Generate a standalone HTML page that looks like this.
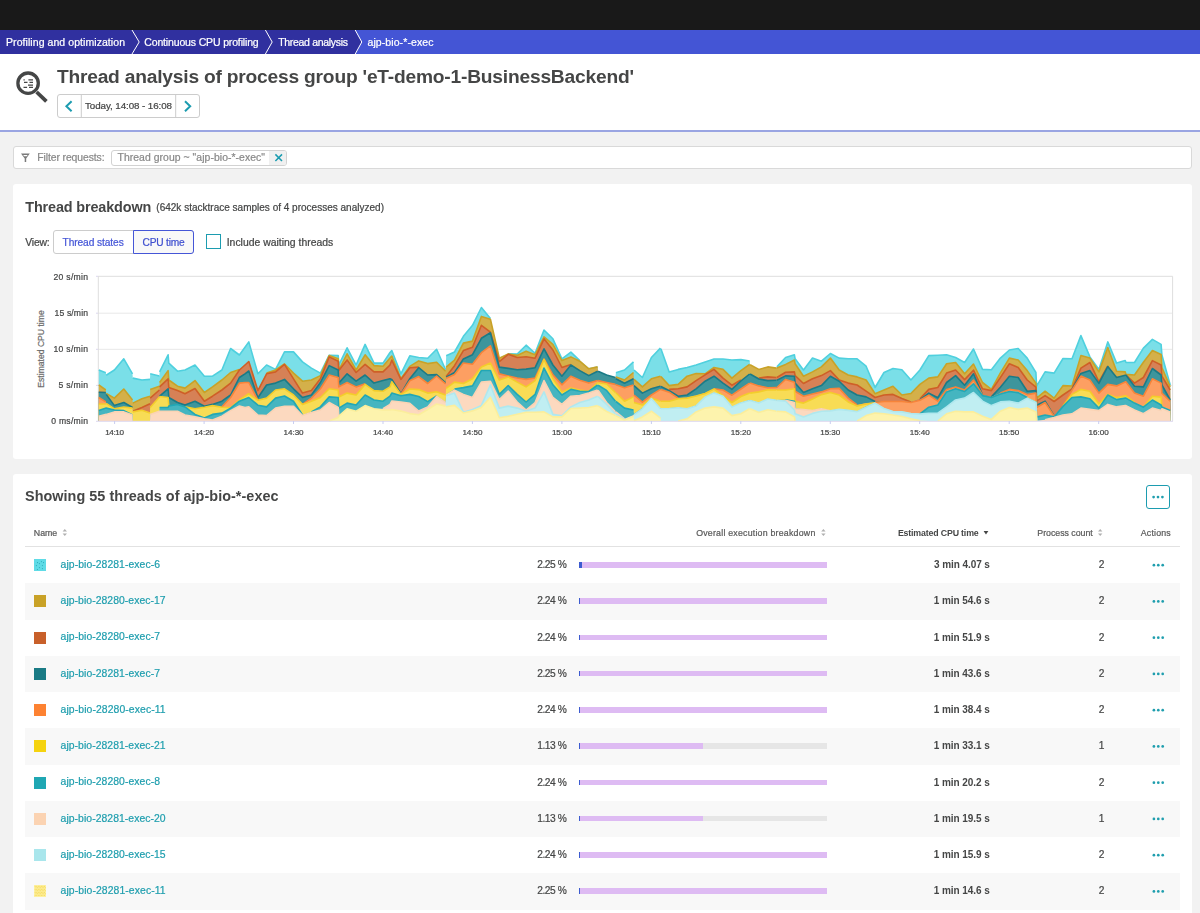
<!DOCTYPE html>
<html>
<head>
<meta charset="utf-8">
<title>Thread analysis</title>
<style>
*{box-sizing:border-box;margin:0;padding:0}
html,body{width:1200px;height:913px;overflow:hidden;background:#f2f2f2;font-family:"Liberation Sans",sans-serif;color:#454646}
.abs{position:absolute}
.t{position:absolute;white-space:nowrap;line-height:1;-webkit-text-stroke:0.22px currentColor}
#topbar{left:0;top:0;width:1200px;height:30px;background:#191919}
#crumbs{left:0;top:30px;width:1200px;height:24px}
#head{left:0;top:54px;width:1200px;height:76.5px;background:#fff}
#hline{left:0;top:130.4px;width:1200px;height:1.4px;background:#9aa5e2}
#tf{left:57px;top:94px;width:143px;height:24px;border:1px solid #ccc;border-radius:3px;background:#fff}
#filter{left:13px;top:146px;width:1178.5px;height:23px;border:1px solid #d9d9d9;border-radius:3px;background:#fff}
#tag{left:110.5px;top:149.5px;width:176.5px;height:16.5px;border:1px solid #d2d2d2;border-radius:3px;background:#fff;overflow:hidden}
#tag i{position:absolute;right:0;top:0;width:17px;height:16px;background:#f0f0f0}
#card1{left:13px;top:184px;width:1178.5px;height:274.5px;background:#fff;border-radius:3px}
#card2{left:13px;top:473.6px;width:1178.5px;height:445px;background:#fff;border-radius:3px}
#tog{left:52.5px;top:230.3px;width:141.7px;height:23.4px;border:1px solid #ccc;border-radius:3px;background:#fff}
#togsel{left:132.6px;top:230.3px;width:61.6px;height:23.4px;border:1px solid #4556d7;border-radius:0 3px 3px 0;background:#f8f8f8}
#cb{left:205.7px;top:234.3px;width:15px;height:15px;border:1.6px solid #1c9cb0;background:#fff}
#morebtn{left:1146px;top:485.3px;width:24px;height:23.4px;border:1px solid #1c9cb0;border-radius:3px;background:#fff}
.dots{position:absolute;width:2.4px;height:2.4px;border-radius:50%;background:#1f9eae;box-shadow:4.5px 0 0 #1f9eae,9px 0 0 #1f9eae}
#thline{left:24.5px;top:546px;width:1155.5px;height:1px;background:#e2e2e2}
#ylab{left:40.6px;top:348.6px;width:0;height:0}
#ylab span{position:absolute;left:-60px;top:-5px;width:120px;text-align:center;font-size:8.6px;line-height:10px;color:#6a6a6a;white-space:nowrap;transform:rotate(-90deg);transform-origin:50% 50%;letter-spacing:0px;-webkit-text-stroke:0.2px #6a6a6a}
</style>
</head>
<body>
<div id="topbar" class="abs"></div>
<svg id="crumbs" class="abs" width="1200" height="24" viewBox="0 0 1200 24">
  <rect x="0" y="0" width="1200" height="24" fill="#4455d5"/>
  <path d="M0,0H355.2L361.8,12L355.2,24H0Z" fill="#30309f"/>
  <path d="M132,0L139.2,12L132,24M265.4,0L272.2,12L265.4,24M355.2,0L361.8,12L355.2,24" fill="none" stroke="#fff" stroke-width="1"/>
</svg>
<div id="head" class="abs"></div>
<div id="hline" class="abs"></div>
<!-- magnifier icon -->
<svg class="abs" style="left:10px;top:64px" width="44" height="44" viewBox="10 64 44 44">
  <circle cx="28.1" cy="83.2" r="10.2" fill="none" stroke="#454646" stroke-width="3.3"/>
  <path d="M36.6,92L46.4,101.4" stroke="#454646" stroke-width="3.8" fill="none"/>
  <path d="M23.5,79.8h1.2M28.4,79.8h4.6M24,82.3h3.5M29.5,82.3h3.5M28,85.1h5M23.5,87.4h3.6M29,87.4h4" stroke="#454646" stroke-width="1.2" fill="none"/>
</svg>
<!-- timeframe -->
<div id="tf" class="abs"></div>
<svg class="abs" style="left:57px;top:94px" width="143" height="24" viewBox="57 94 143 24">
  <path d="M81.3,94.5V117.5M175.7,94.5V117.5" stroke="#ccc" stroke-width="1" fill="none"/>
  <path d="M71.6,101.2L66.4,106.2L71.6,111.2" stroke="#1c9cb0" stroke-width="2" fill="none"/>
  <path d="M185,101.2L190.2,106.2L185,111.2" stroke="#1c9cb0" stroke-width="2" fill="none"/>
</svg>
<!-- filter -->
<div id="filter" class="abs"></div>
<svg class="abs" style="left:20px;top:152px" width="12" height="12" viewBox="20 152 12 12">
  <path fill-rule="evenodd" d="M21,153.5H29.8L26.2,158.4V162.1H24.7V158.4ZM23.2,155.1H27.6L26.8,156.2H24Z" fill="#7a7a7a"/>
</svg>
<div id="tag" class="abs"><i></i></div>
<svg class="abs" style="left:274px;top:153px" width="10" height="10" viewBox="274 153 10 10">
  <path d="M275.4,154.4L282,161M282,154.4L275.4,161" stroke="#1c9cb0" stroke-width="1.5" fill="none"/>
</svg>
<!-- cards -->
<div id="card1" class="abs"></div>
<div id="card2" class="abs"></div>
<div id="tog" class="abs"></div>
<div id="togsel" class="abs"></div>
<div id="cb" class="abs"></div>
<!-- chart -->
<svg class="abs" style="left:0;top:270px" width="1200" height="160" viewBox="0 270 1200 160">
  <g stroke="#e8e8e8" stroke-width="1" fill="none">
    <path d="M98,313.2H1172.6M98,349.3H1172.6M98,385.4H1172.6"/>
  </g>
  <path d="M98,276.3H1172.6V421M98.3,276.3V421" stroke="#dedede" stroke-width="1" fill="none"/>
  <g>
<path d="M98.8,421.0L98.8,370.0L105.8,372.8L106.2,375.2L114.4,370.0L123.8,358.8L132.5,373.8L132.8,378.1L141.9,380.0L150.0,379.4L150.2,373.8L159.4,376.0L159.6,371.9L168.1,354.8L168.8,363.1L177.5,371.2L185.0,370.0L195.0,365.0L204.4,376.2L212.5,376.2L221.9,370.0L230.6,348.5L239.4,355.0L245.0,347.2L248.8,341.9L257.9,373.8L266.6,365.0L275.6,369.4L284.5,351.9L293.5,351.9L302.5,361.9L311.4,368.1L320.4,373.1L329.2,355.2L338.2,355.6L338.8,365.0L347.1,347.8L356.1,365.0L365.1,344.4L374.0,363.1L383.0,363.1L390.0,352.5L391.8,350.6L400.9,373.9L409.8,355.8L418.7,357.5L427.7,358.2L436.6,349.3L445.6,369.8L446.2,355.8L454.5,352.0L463.4,336.3L472.5,325.3L481.4,307.5L490.4,318.5L499.3,357.5L508.2,353.8L517.2,354.1L526.1,345.2L535.1,353.4L544.0,330.0L552.9,338.8L561.9,358.8L570.9,352.2L579.8,360.6L588.8,368.1L597.6,366.2L598.1,371.2L606.6,375.0L615.4,377.5L615.9,372.8L624.5,370.0L633.5,361.9L634.0,370.0L642.4,377.5L651.4,357.5L660.4,348.1L660.9,348.8L669.2,371.9L678.2,369.4L687.1,367.5L696.1,365.0L705.1,361.9L714.0,359.0L723.0,359.0L731.9,360.0L740.9,359.6L749.6,361.0L750.1,364.8L758.8,369.4L767.8,366.9L776.4,367.8L776.9,366.9L785.6,357.5L794.4,354.8L795.1,358.8L803.5,370.0L812.5,358.1L821.4,361.2L830.4,353.5L839.2,358.1L848.2,358.8L857.1,358.8L866.1,366.2L875.1,387.5L884.0,372.5L893.0,368.5L901.9,369.8L910.9,380.0L919.9,370.0L928.8,355.6L937.8,355.2L946.6,354.8L955.6,357.5L964.6,362.5L973.5,349.0L982.5,369.4L991.4,369.8L1000.4,358.1L1009.4,350.0L1018.2,348.5L1027.2,358.1L1035.9,372.5L1036.6,386.2L1045.1,371.9L1054.1,373.1L1063.0,358.5L1072.0,358.8L1080.9,335.6L1089.9,356.9L1098.9,369.4L1107.8,341.9L1116.6,363.1L1125.2,360.6L1126.0,362.5L1134.5,362.5L1143.4,348.1L1152.4,339.4L1161.1,344.4L1161.9,355.0L1170.2,385.0L1170.6,421.0L1170.6,421.0Z" fill="#7adfe8"/>
<path d="M98.8,370.0L105.8,372.8M106.2,375.2L114.4,370.0L123.8,358.8L132.5,373.8M132.8,378.1L141.9,380.0L150.0,379.4M150.2,373.8L159.4,376.0M159.6,371.9L168.1,354.8L168.8,363.1L177.5,371.2L185.0,370.0L195.0,365.0L204.4,376.2L212.5,376.2L221.9,370.0L230.6,348.5L239.4,355.0L245.0,347.2L248.8,341.9L257.9,373.8L266.6,365.0L275.6,369.4L284.5,351.9L293.5,351.9L302.5,361.9L311.4,368.1L320.4,373.1L329.2,355.2L338.2,355.6L338.8,365.0L347.1,347.8L356.1,365.0L365.1,344.4L374.0,363.1L383.0,363.1L390.0,352.5L391.8,350.6L400.9,373.9L409.8,355.8L418.7,357.5L427.7,358.2L436.6,349.3L445.6,369.8M446.2,355.8L454.5,352.0L463.4,336.3L472.5,325.3L481.4,307.5L490.4,318.5M508.2,353.8L517.2,354.1L526.1,345.2L535.1,353.4L544.0,330.0L552.9,338.8L561.9,358.8L570.9,352.2L579.8,360.6M615.9,372.8L624.5,370.0L633.5,361.9M634.0,370.0L642.4,377.5L651.4,357.5L660.4,348.1M660.9,348.8L669.2,371.9L678.2,369.4L687.1,367.5L696.1,365.0L705.1,361.9L714.0,359.0L723.0,359.0L731.9,360.0L740.9,359.6L749.6,361.0M776.9,366.9L785.6,357.5L794.4,354.8L795.1,358.8L803.5,370.0L812.5,358.1L821.4,361.2L830.4,353.5L839.2,358.1L848.2,358.8L857.1,358.8L866.1,366.2L875.1,387.5L884.0,372.5L893.0,368.5L901.9,369.8L910.9,380.0L919.9,370.0L928.8,355.6L937.8,355.2L946.6,354.8L955.6,357.5L964.6,362.5L973.5,349.0L982.5,369.4L991.4,369.8L1000.4,358.1L1009.4,350.0L1018.2,348.5L1027.2,358.1L1035.9,372.5L1036.6,386.2L1045.1,371.9L1054.1,373.1L1063.0,358.5L1072.0,358.8L1080.9,335.6L1089.9,356.9L1098.9,369.4L1107.8,341.9L1116.6,363.1L1125.2,360.6L1126.0,362.5L1134.5,362.5L1143.4,348.1L1152.4,339.4L1161.1,344.4L1161.9,355.0L1170.2,385.0" fill="none" stroke="#4fd0de" stroke-width="1.6" stroke-linejoin="round"/>
<path d="M98.8,421.0L98.8,384.8L105.8,390.0L106.2,393.5L114.4,398.1L123.8,389.0L132.5,400.0L132.8,403.1L141.9,398.8L150.0,396.2L150.2,389.4L159.4,386.2L159.6,382.5L168.1,370.6L168.8,380.0L177.5,386.2L185.0,388.1L195.0,380.6L204.4,392.5L212.5,386.9L221.9,380.0L230.6,372.5L239.4,369.4L245.0,364.4L248.8,361.0L257.9,390.0L266.6,373.1L275.6,370.0L284.5,364.0L293.5,373.1L302.5,381.2L311.4,380.0L320.4,375.6L329.2,355.6L338.2,358.8L338.8,370.0L347.1,353.8L356.1,370.0L365.1,354.8L374.0,365.6L383.0,366.2L390.0,358.1L391.8,356.1L400.9,378.7L409.8,366.4L418.7,360.9L427.7,363.6L436.6,362.3L445.6,371.2L446.2,367.1L454.5,360.2L463.4,343.1L472.5,341.1L481.4,316.4L490.4,319.2L499.3,358.2L508.2,354.1L517.2,355.4L526.1,351.3L535.1,354.7L544.0,336.9L552.9,344.4L561.9,360.6L570.9,356.9L579.8,361.2L588.8,368.8L597.6,366.9L598.1,371.2L606.6,375.0L615.4,377.5L615.9,376.9L624.5,380.0L633.5,372.5L634.0,379.4L642.4,386.9L651.4,378.8L660.4,376.2L660.9,376.5L669.2,385.6L678.2,384.4L687.1,376.2L696.1,373.5L705.1,373.8L714.0,367.5L723.0,369.4L731.9,378.1L740.9,370.6L749.6,364.4L750.1,364.8L758.8,369.4L767.8,366.9L776.4,368.1L776.9,368.1L785.6,364.4L794.4,360.0L795.1,363.8L803.5,376.2L812.5,371.9L821.4,366.9L830.4,358.1L839.2,370.0L848.2,375.0L857.1,376.9L866.1,380.0L875.1,393.8L884.0,390.0L893.0,386.2L901.9,395.0L910.9,393.5L919.9,384.4L928.8,378.1L937.8,376.9L946.6,363.8L955.6,362.5L964.6,373.8L973.5,364.0L982.5,382.5L991.4,389.4L1000.4,372.8L1009.4,358.1L1018.2,360.0L1027.2,370.6L1035.9,383.1L1036.6,398.1L1045.1,391.2L1054.1,398.1L1063.0,385.6L1072.0,386.0L1080.9,355.6L1089.9,358.1L1098.9,371.9L1107.8,347.5L1116.6,371.2L1125.2,371.9L1126.0,374.4L1134.5,375.0L1143.4,362.2L1152.4,350.6L1161.1,354.4L1161.9,367.5L1170.2,386.9L1170.6,421.0L1170.6,421.0Z" fill="#d4b04a"/>
<path d="M98.8,384.8L105.8,390.0M106.2,393.5L114.4,398.1L123.8,389.0L132.5,400.0M132.8,403.1L141.9,398.8L150.0,396.2M150.2,389.4L159.4,386.2M159.6,382.5L168.1,370.6L168.8,380.0L177.5,386.2L185.0,388.1L195.0,380.6L204.4,392.5L212.5,386.9L221.9,380.0L230.6,372.5L239.4,369.4M266.6,373.1L275.6,370.0L284.5,364.0L293.5,373.1L302.5,381.2L311.4,380.0L320.4,375.6L329.2,355.6L338.2,358.8L338.8,370.0L347.1,353.8L356.1,370.0L365.1,354.8L374.0,365.6L383.0,366.2L390.0,358.1L391.8,356.1L400.9,378.7L409.8,366.4L418.7,360.9L427.7,363.6L436.6,362.3L445.6,371.2M446.2,367.1L454.5,360.2L463.4,343.1L472.5,341.1L481.4,316.4L490.4,319.2L499.3,358.2L508.2,354.1L517.2,355.4L526.1,351.3L535.1,354.7L544.0,336.9L552.9,344.4L561.9,360.6L570.9,356.9L579.8,361.2L588.8,368.8L597.6,366.9M615.9,376.9L624.5,380.0L633.5,372.5M634.0,379.4L642.4,386.9L651.4,378.8L660.4,376.2M660.9,376.5L669.2,385.6L678.2,384.4L687.1,376.2L696.1,373.5L705.1,373.8L714.0,367.5L723.0,369.4L731.9,378.1L740.9,370.6L749.6,364.4M750.1,364.8L758.8,369.4L767.8,366.9L776.4,368.1M776.9,368.1L785.6,364.4L794.4,360.0L795.1,363.8L803.5,376.2L812.5,371.9L821.4,366.9L830.4,358.1L839.2,370.0L848.2,375.0L857.1,376.9L866.1,380.0L875.1,393.8L884.0,390.0L893.0,386.2L901.9,395.0L910.9,393.5L919.9,384.4L928.8,378.1L937.8,376.9L946.6,363.8L955.6,362.5L964.6,373.8L973.5,364.0L982.5,382.5L991.4,389.4L1000.4,372.8L1009.4,358.1L1018.2,360.0L1027.2,370.6L1035.9,383.1L1036.6,398.1L1045.1,391.2L1054.1,398.1L1063.0,385.6L1072.0,386.0L1080.9,355.6L1089.9,358.1L1098.9,371.9L1107.8,347.5L1116.6,371.2L1125.2,371.9L1126.0,374.4L1134.5,375.0L1143.4,362.2L1152.4,350.6L1161.1,354.4L1161.9,367.5L1170.2,386.9" fill="none" stroke="#c9a227" stroke-width="1.6" stroke-linejoin="round"/>
<path d="M98.8,421.0L98.8,391.2L105.8,391.9L106.2,394.4L114.4,405.6L123.8,402.5L132.5,407.5L132.8,411.2L141.9,407.5L150.0,403.8L150.2,398.1L159.4,390.0L159.6,386.9L168.1,378.8L168.8,387.5L177.5,390.6L185.0,393.8L195.0,388.5L204.4,401.2L212.5,396.2L221.9,390.0L230.6,383.1L239.4,370.0L245.0,365.0L248.8,361.5L257.9,390.6L266.6,373.8L275.6,371.9L284.5,364.4L293.5,378.8L302.5,393.1L311.4,390.6L320.4,378.8L329.2,356.9L338.2,361.2L338.8,370.6L347.1,360.0L356.1,372.5L365.1,364.4L374.0,371.9L383.0,371.9L390.0,365.0L391.8,360.2L400.9,379.4L409.8,367.7L418.7,367.1L427.7,374.6L436.6,373.9L445.6,382.1L446.2,376.6L454.5,365.7L463.4,350.6L472.5,347.2L481.4,325.3L490.4,332.2L499.3,361.6L508.2,354.3L517.2,357.5L526.1,356.8L535.1,358.2L544.0,338.8L552.9,350.0L561.9,367.5L570.9,364.4L579.8,370.0L588.8,375.0L597.6,370.6L598.1,371.2L606.6,375.0L615.4,377.5L615.9,378.5L624.5,382.8L633.5,378.1L634.0,385.0L642.4,392.5L651.4,388.1L660.4,385.6L660.9,385.8L669.2,389.4L678.2,388.8L687.1,386.9L696.1,380.6L705.1,374.8L714.0,369.4L723.0,378.1L731.9,385.2L740.9,380.0L749.6,373.8L750.1,373.8L758.8,378.1L767.8,376.9L776.4,377.5L776.9,377.5L785.6,372.2L794.4,371.9L795.1,375.6L803.5,383.5L812.5,378.8L821.4,375.6L830.4,370.6L839.2,380.0L848.2,383.1L857.1,385.0L866.1,391.2L875.1,397.5L884.0,395.0L893.0,394.4L901.9,398.4L910.9,401.9L919.9,398.8L928.8,389.4L937.8,387.5L946.6,373.1L955.6,370.0L964.6,379.6L973.5,370.2L982.5,388.8L991.4,390.6L1000.4,377.5L1009.4,363.8L1018.2,367.5L1027.2,380.0L1035.9,387.2L1036.6,401.2L1045.1,395.6L1054.1,401.5L1063.0,395.0L1072.0,388.8L1080.9,368.1L1089.9,362.5L1098.9,381.9L1107.8,366.0L1116.6,377.1L1125.2,375.0L1126.0,375.0L1134.5,383.1L1143.4,377.5L1152.4,360.6L1161.1,365.0L1161.9,376.2L1170.2,390.0L1170.6,421.0L1170.6,421.0Z" fill="#d68156"/>
<path d="M132.8,411.2L141.9,407.5L150.0,403.8M150.2,398.1L159.4,390.0M159.6,386.9L168.1,378.8L168.8,387.5L177.5,390.6L185.0,393.8L195.0,388.5L204.4,401.2L212.5,396.2L221.9,390.0L230.6,383.1L239.4,370.0L245.0,365.0L248.8,361.5L257.9,390.6L266.6,373.8L275.6,371.9L284.5,364.4L293.5,378.8L302.5,393.1L311.4,390.6L320.4,378.8L329.2,356.9L338.2,361.2L338.8,370.6L347.1,360.0L356.1,372.5L365.1,364.4L374.0,371.9L383.0,371.9L390.0,365.0L391.8,360.2L400.9,379.4L409.8,367.7L418.7,367.1M446.2,376.6L454.5,365.7L463.4,350.6L472.5,347.2L481.4,325.3L490.4,332.2L499.3,361.6L508.2,354.3L517.2,357.5L526.1,356.8L535.1,358.2L544.0,338.8L552.9,350.0L561.9,367.5L570.9,364.4M669.2,389.4L678.2,388.8L687.1,386.9L696.1,380.6L705.1,374.8L714.0,369.4L723.0,378.1L731.9,385.2L740.9,380.0M758.8,378.1L767.8,376.9L776.4,377.5M776.9,377.5L785.6,372.2L794.4,371.9L795.1,375.6L803.5,383.5L812.5,378.8L821.4,375.6L830.4,370.6L839.2,380.0L848.2,383.1L857.1,385.0L866.1,391.2L875.1,397.5L884.0,395.0L893.0,394.4L901.9,398.4L910.9,401.9M919.9,398.8L928.8,389.4L937.8,387.5L946.6,373.1L955.6,370.0L964.6,379.6L973.5,370.2L982.5,388.8L991.4,390.6L1000.4,377.5L1009.4,363.8L1018.2,367.5L1027.2,380.0L1035.9,387.2L1036.6,401.2L1045.1,395.6L1054.1,401.5L1063.0,395.0L1072.0,388.8L1080.9,368.1L1089.9,362.5L1098.9,381.9L1107.8,366.0M1126.0,375.0L1134.5,383.1L1143.4,377.5L1152.4,360.6L1161.1,365.0L1161.9,376.2L1170.2,390.0" fill="none" stroke="#cf5f27" stroke-width="1.6" stroke-linejoin="round"/>
<path d="M98.8,421.0L98.8,392.2L105.8,392.5L106.2,394.4L114.4,405.6L123.8,402.5L132.5,407.5L132.8,411.9L141.9,410.2L150.0,413.1L150.2,407.5L159.4,396.9L159.6,396.2L168.1,388.8L168.8,397.5L177.5,402.5L185.0,405.0L195.0,401.2L204.4,406.2L212.5,404.4L221.9,401.2L230.6,395.0L239.4,377.5L245.0,373.8L248.8,371.0L257.9,397.8L266.6,385.0L275.6,383.1L284.5,379.4L293.5,388.8L302.5,397.5L311.4,395.0L320.4,382.5L329.2,365.6L338.2,370.0L338.8,383.1L347.1,373.8L356.1,381.2L365.1,375.0L374.0,383.1L383.0,380.6L390.0,378.8L391.8,379.4L400.9,393.8L409.8,378.7L418.7,367.7L427.7,375.0L436.6,374.6L445.6,382.8L446.2,377.3L454.5,372.5L463.4,358.9L472.5,354.7L481.4,338.3L490.4,332.8L499.3,367.1L508.2,368.4L517.2,369.8L526.1,369.1L535.1,367.7L544.0,348.8L552.9,365.0L561.9,376.2L570.9,365.0L579.8,370.6L588.8,375.6L597.6,371.2L598.1,371.2L606.6,375.0L615.4,377.5L615.9,378.8L624.5,383.2L633.5,378.8L634.0,385.6L642.4,393.1L651.4,388.8L660.4,386.2L660.9,386.5L669.2,390.6L678.2,396.2L687.1,395.0L696.1,388.8L705.1,381.2L714.0,376.2L723.0,383.1L731.9,389.4L740.9,381.0L749.6,374.0L750.1,374.0L758.8,379.0L767.8,380.6L776.4,380.2L776.9,380.2L785.6,375.9L794.4,376.2L795.1,383.1L803.5,392.5L812.5,388.8L821.4,385.6L830.4,376.2L839.2,381.2L848.2,390.0L857.1,395.0L866.1,396.9L875.1,401.5L884.0,401.2L893.0,401.2L901.9,401.2L910.9,402.1L919.9,399.8L928.8,393.1L937.8,397.8L946.6,382.5L955.6,375.6L964.6,385.2L973.5,373.8L982.5,394.8L991.4,396.9L1000.4,387.2L1009.4,376.2L1018.2,377.5L1027.2,391.2L1035.9,390.6L1036.6,405.2L1045.1,401.2L1054.1,415.9L1063.0,405.2L1072.0,389.8L1080.9,373.5L1089.9,370.6L1098.9,383.4L1107.8,366.5L1116.6,377.5L1125.2,375.2L1126.0,375.2L1134.5,386.2L1143.4,386.9L1152.4,368.5L1161.1,375.0L1161.9,385.0L1170.2,400.0L1170.6,421.0L1170.6,421.0Z" fill="#3d959c"/>
<path d="M98.8,392.2L105.8,392.5M106.2,394.4L114.4,405.6L123.8,402.5L132.5,407.5M159.6,396.2L168.1,388.8L168.8,397.5L177.5,402.5L185.0,405.0L195.0,401.2L204.4,406.2L212.5,404.4L221.9,401.2L230.6,395.0L239.4,377.5L245.0,373.8L248.8,371.0L257.9,397.8L266.6,385.0L275.6,383.1L284.5,379.4L293.5,388.8L302.5,397.5L311.4,395.0L320.4,382.5L329.2,365.6L338.2,370.0L338.8,383.1L347.1,373.8L356.1,381.2L365.1,375.0L374.0,383.1L383.0,380.6L390.0,378.8L391.8,379.4L400.9,393.8L409.8,378.7L418.7,367.7L427.7,375.0L436.6,374.6L445.6,382.8M446.2,377.3L454.5,372.5L463.4,358.9L472.5,354.7L481.4,338.3L490.4,332.8L499.3,367.1L508.2,368.4L517.2,369.8L526.1,369.1L535.1,367.7L544.0,348.8L552.9,365.0L561.9,376.2L570.9,365.0L579.8,370.6L588.8,375.6L597.6,371.2M598.1,371.2L606.6,375.0L615.4,377.5M615.9,378.8L624.5,383.2L633.5,378.8M634.0,385.6L642.4,393.1L651.4,388.8L660.4,386.2M660.9,386.5L669.2,390.6L678.2,396.2L687.1,395.0L696.1,388.8L705.1,381.2L714.0,376.2L723.0,383.1L731.9,389.4L740.9,381.0L749.6,374.0M750.1,374.0L758.8,379.0L767.8,380.6L776.4,380.2M776.9,380.2L785.6,375.9L794.4,376.2L795.1,383.1L803.5,392.5L812.5,388.8L821.4,385.6L830.4,376.2L839.2,381.2L848.2,390.0L857.1,395.0L866.1,396.9L875.1,401.5M919.9,399.8L928.8,393.1L937.8,397.8L946.6,382.5L955.6,375.6L964.6,385.2L973.5,373.8L982.5,394.8M991.4,396.9L1000.4,387.2L1009.4,376.2L1018.2,377.5L1027.2,391.2L1035.9,390.6L1036.6,405.2L1045.1,401.2L1054.1,415.9M1072.0,389.8L1080.9,373.5L1089.9,370.6L1098.9,383.4L1107.8,366.5L1116.6,377.5L1125.2,375.2L1126.0,375.2L1134.5,386.2L1143.4,386.9L1152.4,368.5L1161.1,375.0L1161.9,385.0L1170.2,400.0" fill="none" stroke="#1a7b87" stroke-width="1.6" stroke-linejoin="round"/>
<path d="M98.8,421.0L98.8,397.5L105.8,401.9L106.2,403.1L114.4,408.8L123.8,406.9L132.5,408.1L132.8,411.9L141.9,410.2L150.0,413.1L150.2,407.5L159.4,396.9L159.6,396.5L168.1,397.5L168.8,406.0L177.5,404.4L185.0,406.9L195.0,408.8L204.4,407.2L212.5,405.6L221.9,406.9L230.6,397.5L239.4,383.1L245.0,382.5L248.8,382.5L257.9,400.2L266.6,398.1L275.6,390.0L284.5,388.8L293.5,395.0L302.5,404.4L311.4,398.1L320.4,388.8L329.2,375.0L338.2,377.5L338.8,386.9L347.1,382.5L356.1,386.9L365.1,383.8L374.0,390.6L383.0,391.2L390.0,386.9L391.8,381.4L400.9,394.2L409.8,380.7L418.7,376.6L427.7,383.5L436.6,376.0L445.6,383.8L446.2,378.3L454.5,374.6L463.4,363.0L472.5,364.3L481.4,352.7L490.4,345.8L499.3,373.9L508.2,376.0L517.2,378.0L526.1,379.4L535.1,378.0L544.0,359.0L552.9,374.8L561.9,384.8L570.9,376.2L579.8,380.2L588.8,383.1L597.6,380.6L598.1,380.6L606.6,382.5L615.4,384.4L615.9,384.8L624.5,387.8L633.5,385.0L634.0,395.0L642.4,402.1L651.4,395.0L660.4,389.4L660.9,389.6L669.2,392.2L678.2,398.1L687.1,397.5L696.1,395.6L705.1,393.1L714.0,388.8L723.0,390.0L731.9,395.2L740.9,389.0L749.6,383.1L750.1,383.1L758.8,385.9L767.8,387.8L776.4,387.5L776.9,387.5L785.6,379.4L794.4,382.2L795.1,391.2L803.5,396.2L812.5,394.0L821.4,391.9L830.4,388.8L839.2,388.4L848.2,398.1L857.1,405.0L866.1,403.1L875.1,402.5L884.0,401.5L893.0,401.5L901.9,401.5L910.9,402.5L919.9,400.2L928.8,395.2L937.8,401.2L946.6,389.6L955.6,386.9L964.6,390.0L973.5,380.0L982.5,395.0L991.4,397.1L1000.4,393.1L1009.4,389.4L1018.2,390.6L1027.2,394.6L1035.9,393.1L1036.6,407.5L1045.1,402.5L1054.1,416.2L1063.0,405.9L1072.0,390.1L1080.9,376.1L1089.9,380.0L1098.9,393.1L1107.8,384.4L1116.6,385.9L1125.2,381.9L1126.0,381.9L1134.5,393.1L1143.4,396.2L1152.4,378.8L1161.1,383.1L1161.9,393.1L1170.2,401.2L1170.6,421.0L1170.6,421.0Z" fill="#fd9f62"/>
<path d="M98.8,397.5L105.8,401.9M221.9,406.9L230.6,397.5L239.4,383.1L245.0,382.5L248.8,382.5L257.9,400.2M302.5,404.4L311.4,398.1L320.4,388.8L329.2,375.0L338.2,377.5L338.8,386.9L347.1,382.5L356.1,386.9L365.1,383.8M400.9,394.2L409.8,380.7L418.7,376.6L427.7,383.5L436.6,376.0L445.6,383.8M446.2,378.3L454.5,374.6L463.4,363.0L472.5,364.3L481.4,352.7L490.4,345.8L499.3,373.9L508.2,376.0L517.2,378.0L526.1,379.4L535.1,378.0L544.0,359.0L552.9,374.8L561.9,384.8L570.9,376.2L579.8,380.2L588.8,383.1L597.6,380.6M598.1,380.6L606.6,382.5L615.4,384.4M615.9,384.8L624.5,387.8L633.5,385.0M634.0,395.0L642.4,402.1L651.4,395.0L660.4,389.4M660.9,389.6L669.2,392.2L678.2,398.1M714.0,388.8L723.0,390.0L731.9,395.2L740.9,389.0L749.6,383.1M750.1,383.1L758.8,385.9L767.8,387.8L776.4,387.5M776.9,387.5L785.6,379.4L794.4,382.2L795.1,391.2L803.5,396.2L812.5,394.0L821.4,391.9L830.4,388.8L839.2,388.4L848.2,398.1L857.1,405.0M875.1,402.5L884.0,401.5L893.0,401.5L901.9,401.5L910.9,402.5L919.9,400.2L928.8,395.2L937.8,401.2L946.6,389.6L955.6,386.9L964.6,390.0L973.5,380.0L982.5,395.0M1000.4,393.1L1009.4,389.4L1018.2,390.6L1027.2,394.6L1035.9,393.1L1036.6,407.5L1045.1,402.5L1054.1,416.2M1063.0,405.9L1072.0,390.1L1080.9,376.1L1089.9,380.0L1098.9,393.1L1107.8,384.4L1116.6,385.9L1125.2,381.9L1126.0,381.9L1134.5,393.1L1143.4,396.2L1152.4,378.8L1161.1,383.1L1161.9,393.1L1170.2,401.2" fill="none" stroke="#f7843a" stroke-width="1.6" stroke-linejoin="round"/>
<path d="M98.8,421.0L98.8,404.0L105.8,404.0L106.2,403.4L114.4,408.9L123.8,407.0L132.5,408.1L132.8,411.9L141.9,410.2L150.0,413.1L150.2,407.5L159.4,396.9L159.6,396.5L168.1,397.5L168.8,406.0L177.5,404.4L185.0,406.9L195.0,408.8L204.4,407.2L212.5,405.6L221.9,407.2L230.6,407.5L239.4,400.0L245.0,396.2L248.8,393.8L257.9,400.2L266.6,398.1L275.6,390.0L284.5,388.8L293.5,395.0L302.5,404.4L311.4,401.2L320.4,397.5L329.2,388.8L338.2,390.0L338.8,396.9L347.1,393.1L356.1,395.0L365.1,384.4L374.0,390.6L383.0,391.2L390.0,386.9L391.8,381.8L400.9,394.4L409.8,389.0L418.7,389.6L427.7,393.1L436.6,391.7L445.6,395.1L446.2,388.3L454.5,382.1L463.4,383.5L472.5,378.7L481.4,367.1L490.4,363.0L499.3,380.1L508.2,376.9L517.2,382.1L526.1,386.9L535.1,380.7L544.0,359.4L552.9,378.5L561.9,391.9L570.9,388.1L579.8,390.0L588.8,391.2L597.6,382.5L598.1,382.8L606.6,384.0L615.4,392.5L615.9,392.8L624.5,401.2L633.5,396.9L634.0,402.5L642.4,405.0L651.4,398.1L660.4,401.2L660.9,401.2L669.2,401.2L678.2,398.8L687.1,398.1L696.1,396.0L705.1,393.5L714.0,389.0L723.0,395.6L731.9,402.5L740.9,396.5L749.6,393.1L750.1,393.1L758.8,391.9L767.8,389.8L776.4,390.0L776.9,390.0L785.6,390.0L794.4,388.8L795.1,401.2L803.5,403.1L812.5,399.0L821.4,394.6L830.4,392.5L839.2,395.0L848.2,401.9L857.1,405.9L866.1,404.0L875.1,402.9L884.0,408.1L893.0,411.2L901.9,411.2L910.9,413.1L919.9,413.8L928.8,406.9L937.8,404.6L946.6,391.5L955.6,388.4L964.6,391.2L973.5,383.1L982.5,395.2L991.4,397.2L1000.4,393.5L1009.4,390.9L1018.2,392.1L1027.2,396.9L1035.9,401.2L1036.6,416.9L1045.1,414.4L1054.1,416.5L1063.0,406.1L1072.0,394.4L1080.9,389.4L1089.9,391.2L1098.9,403.8L1107.8,394.4L1116.6,397.5L1125.2,395.9L1126.0,395.9L1134.5,402.5L1143.4,406.9L1152.4,396.2L1161.1,397.1L1161.9,406.2L1170.2,410.0L1170.6,421.0L1170.6,421.0Z" fill="#f8dc55"/>
<path d="M98.8,404.0L105.8,404.0M106.2,403.4L114.4,408.9L123.8,407.0L132.5,408.1M132.8,411.9L141.9,410.2L150.0,413.1M150.2,407.5L159.4,396.9M159.6,396.5L168.1,397.5L168.8,406.0M185.0,406.9L195.0,408.8L204.4,407.2L212.5,405.6L221.9,407.2L230.6,407.5L239.4,400.0L245.0,396.2L248.8,393.8L257.9,400.2L266.6,398.1L275.6,390.0L284.5,388.8L293.5,395.0L302.5,404.4L311.4,401.2L320.4,397.5L329.2,388.8L338.2,390.0L338.8,396.9L347.1,393.1L356.1,395.0L365.1,384.4L374.0,390.6L383.0,391.2L390.0,386.9L391.8,381.8L400.9,394.4L409.8,389.0L418.7,389.6L427.7,393.1L436.6,391.7L445.6,395.1M446.2,388.3L454.5,382.1L463.4,383.5L472.5,378.7L481.4,367.1L490.4,363.0L499.3,380.1L508.2,376.9L517.2,382.1L526.1,386.9L535.1,380.7L544.0,359.4L552.9,378.5L561.9,391.9L570.9,388.1L579.8,390.0L588.8,391.2L597.6,382.5M598.1,382.8L606.6,384.0L615.4,392.5M615.9,392.8L624.5,401.2L633.5,396.9M634.0,402.5L642.4,405.0L651.4,398.1L660.4,401.2M660.9,401.2L669.2,401.2L678.2,398.8L687.1,398.1L696.1,396.0L705.1,393.5L714.0,389.0L723.0,395.6L731.9,402.5L740.9,396.5L749.6,393.1M750.1,393.1L758.8,391.9L767.8,389.8L776.4,390.0M776.9,390.0L785.6,390.0L794.4,388.8L795.1,401.2L803.5,403.1L812.5,399.0L821.4,394.6L830.4,392.5L839.2,395.0L848.2,401.9L857.1,405.9L866.1,404.0L875.1,402.9M1035.9,401.2L1036.6,416.9M1063.0,406.1L1072.0,394.4L1080.9,389.4L1089.9,391.2L1098.9,403.8L1107.8,394.4L1116.6,397.5L1125.2,395.9L1126.0,395.9L1134.5,402.5M1143.4,406.9L1152.4,396.2L1161.1,397.1L1161.9,406.2" fill="none" stroke="#f3cd2b" stroke-width="1.6" stroke-linejoin="round"/>
<path d="M98.8,421.0L98.8,410.6L106.2,408.1L114.4,410.0L123.8,410.6L132.5,415.0L132.8,421.0L150.0,421.0L150.2,414.4L159.4,411.2L159.6,407.5L168.1,407.5L168.8,406.0L177.5,404.4L185.0,406.9L195.0,414.4L204.4,418.1L212.5,414.4L221.9,413.1L230.6,408.1L239.4,401.2L245.0,399.0L248.8,397.5L257.9,405.2L266.6,406.9L275.6,398.1L284.5,396.0L293.5,401.2L302.5,415.0L311.4,411.9L320.4,406.9L329.2,396.9L338.2,397.5L338.8,408.1L347.1,403.1L356.1,405.0L365.1,395.0L374.0,400.0L383.0,401.2L390.0,396.2L391.8,393.1L400.9,395.8L409.8,394.4L418.7,396.5L427.7,401.6L436.6,395.8L445.6,402.0L446.2,394.4L454.5,389.0L463.4,387.6L472.5,385.9L481.4,370.5L490.4,370.5L499.3,394.4L508.2,385.5L517.2,394.4L526.1,402.0L535.1,394.4L544.0,368.1L552.9,384.8L561.9,395.0L570.9,389.4L579.8,391.2L588.8,391.5L597.6,385.0L598.1,385.2L606.6,390.4L615.4,401.2L615.9,401.5L624.5,408.1L633.5,410.0L634.0,413.8L642.4,408.1L651.4,398.5L660.4,408.5L660.9,408.5L669.2,408.1L678.2,407.5L687.1,408.5L696.1,405.6L705.1,396.9L714.0,392.5L723.0,396.0L731.9,406.9L740.9,402.5L749.6,400.0L750.1,400.0L758.8,402.8L767.8,398.8L776.4,400.0L776.9,400.0L785.6,399.8L794.4,401.2L795.1,408.1L803.5,409.4L812.5,410.2L821.4,408.4L830.4,410.6L839.2,409.0L848.2,410.0L857.1,411.2L866.1,406.2L875.1,403.1L884.0,408.4L893.0,411.5L901.9,411.6L910.9,413.4L919.9,414.0L928.8,407.2L937.8,405.0L946.6,391.9L955.6,388.8L964.6,391.5L973.5,383.8L982.5,395.6L991.4,397.5L1000.4,394.0L1009.4,391.5L1018.2,392.6L1027.2,397.5L1035.9,401.6L1036.6,417.1L1045.1,415.0L1054.1,416.9L1063.0,406.4L1072.0,397.5L1080.9,396.9L1089.9,398.8L1098.9,408.1L1107.8,395.0L1116.6,399.6L1125.2,398.1L1126.0,398.1L1134.5,403.1L1143.4,407.2L1152.4,400.0L1161.1,405.0L1161.9,406.9L1170.2,410.6L1170.6,421.0L1170.6,421.0Z" fill="#45b5c0"/>
<path d="M98.8,410.6L106.2,408.1L114.4,410.0L123.8,410.6L132.5,415.0M159.6,407.5L168.1,407.5L168.8,406.0L177.5,404.4L185.0,406.9L195.0,414.4L204.4,418.1L212.5,414.4L221.9,413.1L230.6,408.1L239.4,401.2L245.0,399.0L248.8,397.5L257.9,405.2L266.6,406.9L275.6,398.1L284.5,396.0L293.5,401.2L302.5,415.0M311.4,411.9L320.4,406.9L329.2,396.9L338.2,397.5L338.8,408.1L347.1,403.1L356.1,405.0L365.1,395.0L374.0,400.0L383.0,401.2L390.0,396.2L391.8,393.1L400.9,395.8L409.8,394.4L418.7,396.5L427.7,401.6L436.6,395.8M454.5,389.0L463.4,387.6L472.5,385.9L481.4,370.5L490.4,370.5L499.3,394.4L508.2,385.5L517.2,394.4L526.1,402.0L535.1,394.4L544.0,368.1L552.9,384.8L561.9,395.0L570.9,389.4L579.8,391.2L588.8,391.5L597.6,385.0M598.1,385.2L606.6,390.4L615.4,401.2M615.9,401.5L624.5,408.1L633.5,410.0M785.6,399.8L794.4,401.2L795.1,408.1M919.9,414.0L928.8,407.2L937.8,405.0L946.6,391.9L955.6,388.8L964.6,391.5L973.5,383.8L982.5,395.6L991.4,397.5L1000.4,394.0L1009.4,391.5L1018.2,392.6L1027.2,397.5M1035.9,401.6L1036.6,417.1L1045.1,415.0L1054.1,416.9L1063.0,406.4L1072.0,397.5L1080.9,396.9L1089.9,398.8L1098.9,408.1L1107.8,395.0L1116.6,399.6L1125.2,398.1L1126.0,398.1L1134.5,403.1L1143.4,407.2L1152.4,400.0L1161.1,405.0L1161.9,406.9L1170.2,410.6" fill="none" stroke="#22a7b5" stroke-width="1.6" stroke-linejoin="round"/>
<path d="M98.8,421.0L98.8,416.2L106.2,414.4L114.4,411.9L123.8,411.9L132.5,415.0L132.8,421.0L150.0,421.0L150.2,414.4L159.4,411.2L168.1,411.2L177.5,411.2L185.0,415.0L195.0,416.9L204.4,418.8L212.5,420.0L221.9,416.2L230.6,410.6L239.4,406.0L245.0,407.5L248.8,406.9L257.9,415.0L266.6,415.6L275.6,408.1L284.5,406.2L293.5,406.2L302.5,415.6L311.4,412.5L320.4,410.0L329.2,402.5L338.2,407.5L338.8,416.2L347.1,408.8L356.1,411.2L365.1,405.6L374.0,408.8L383.0,408.8L390.0,404.4L391.8,401.0L400.9,402.0L409.8,403.3L418.7,411.1L427.7,407.0L436.6,396.5L445.6,402.6L446.2,395.1L454.5,390.1L463.4,394.4L472.5,397.4L481.4,382.1L490.4,381.4L499.3,399.6L508.2,391.0L517.2,402.0L526.1,410.2L535.1,402.6L544.0,380.6L552.9,397.5L561.9,404.4L570.9,396.2L579.8,395.6L588.8,393.1L597.6,390.0L598.1,390.2L606.6,402.5L615.4,411.9L615.9,411.9L624.5,418.8L633.5,415.0L634.0,414.4L642.4,408.5L651.4,398.5L660.4,408.8L660.9,408.8L669.2,408.5L678.2,407.8L687.1,408.8L696.1,405.9L705.1,397.1L714.0,392.9L723.0,396.2L731.9,407.1L740.9,402.9L749.6,400.4L750.1,400.4L758.8,403.0L767.8,399.0L776.4,400.4L776.9,400.4L785.6,400.2L794.4,402.5L795.1,408.8L803.5,409.6L812.5,410.6L821.4,408.8L830.4,410.9L839.2,409.4L848.2,410.4L857.1,411.6L866.1,407.2L875.1,403.1L884.0,408.5L893.0,411.5L901.9,411.9L910.9,413.5L919.9,414.1L928.8,413.4L937.8,413.1L946.6,406.9L955.6,400.0L964.6,398.1L973.5,392.5L982.5,401.2L991.4,405.6L1000.4,401.9L1009.4,401.2L1018.2,403.1L1027.2,398.2L1035.9,402.5L1036.6,420.8L1045.1,419.8L1054.1,417.5L1063.0,415.0L1072.0,413.8L1080.9,408.1L1089.9,409.4L1098.9,410.6L1107.8,404.4L1116.6,406.9L1125.2,405.6L1126.0,405.6L1134.5,410.0L1143.4,413.8L1152.4,408.1L1161.1,410.6L1161.9,408.8L1170.2,411.9L1170.6,421.0L1170.6,421.0Z" fill="#fcd9bf"/>
<path d="M98.8,416.2L106.2,414.4L114.4,411.9L123.8,411.9L132.5,415.0M150.2,414.4L159.4,411.2L168.1,411.2L177.5,411.2L185.0,415.0L195.0,416.9L204.4,418.8L212.5,420.0L221.9,416.2L230.6,410.6L239.4,406.0L245.0,407.5L248.8,406.9L257.9,415.0L266.6,415.6L275.6,408.1L284.5,406.2L293.5,406.2L302.5,415.6L311.4,412.5L320.4,410.0L329.2,402.5L338.2,407.5L338.8,416.2M383.0,408.8L390.0,404.4L391.8,401.0L400.9,402.0L409.8,403.3L418.7,411.1L427.7,407.0L436.6,396.5L445.6,402.6M446.2,395.1L454.5,390.1L463.4,394.4L472.5,397.4L481.4,382.1L490.4,381.4L499.3,399.6L508.2,391.0L517.2,402.0L526.1,410.2L535.1,402.6L544.0,380.6L552.9,397.5L561.9,404.4L570.9,396.2L579.8,395.6L588.8,393.1L597.6,390.0M598.1,390.2L606.6,402.5L615.4,411.9M615.9,411.9L624.5,418.8M785.6,400.2L794.4,402.5L795.1,408.8L803.5,409.6L812.5,410.6L821.4,408.8L830.4,410.9M1035.9,402.5L1036.6,420.8M1045.1,419.8L1054.1,417.5L1063.0,415.0L1072.0,413.8L1080.9,408.1L1089.9,409.4L1098.9,410.6L1107.8,404.4L1116.6,406.9L1125.2,405.6L1126.0,405.6L1134.5,410.0L1143.4,413.8L1152.4,408.1L1161.1,410.6L1161.9,408.8L1170.2,411.9" fill="none" stroke="#fbd3b4" stroke-width="1.6" stroke-linejoin="round"/>
<path d="M98.8,421.0L98.8,421.0L245.0,421.0L248.8,421.0L257.9,421.0L266.6,421.0L275.6,421.0L284.5,421.0L293.5,421.0L302.5,421.0L311.4,421.0L320.4,421.0L329.2,421.0L338.2,417.5L338.8,416.2L347.1,408.8L356.1,411.2L365.1,405.6L374.0,408.8L383.0,410.0L390.0,410.0L391.8,409.5L400.9,411.1L409.8,413.6L418.7,414.7L427.7,409.5L436.6,404.0L445.6,406.1L446.2,395.8L454.5,393.1L463.4,412.2L472.5,409.5L481.4,405.4L490.4,384.9L499.3,408.1L508.2,406.1L517.2,408.1L526.1,410.9L535.1,408.1L544.0,391.9L552.9,414.4L561.9,415.8L570.9,406.9L579.8,402.5L588.8,400.0L597.6,396.2L598.1,396.5L606.6,404.4L615.4,413.8L615.9,413.8L624.5,419.4L633.5,416.0L634.0,414.8L642.4,408.8L651.4,398.5L660.4,408.8L660.9,408.8L669.2,408.5L678.2,407.8L687.1,408.8L696.1,405.9L705.1,397.1L714.0,392.9L723.0,396.2L731.9,407.1L740.9,402.9L749.6,400.4L750.1,400.4L758.8,403.0L767.8,399.0L776.4,400.4L776.9,400.4L785.6,401.2L794.4,410.0L795.1,413.8L803.5,416.9L812.5,413.4L821.4,411.2L830.4,410.9L839.2,409.4L848.2,410.4L857.1,411.6L866.1,407.2L875.1,403.1L884.0,408.5L893.0,411.5L901.9,411.9L910.9,413.5L919.9,414.1L928.8,413.4L937.8,413.1L946.6,406.9L955.6,400.0L964.6,398.1L973.5,392.5L982.5,401.2L991.4,405.6L1000.4,401.9L1009.4,401.2L1018.2,403.1L1027.2,398.2L1035.9,402.5L1036.6,421.0L1045.1,421.0L1054.1,421.0L1063.0,421.0L1072.0,421.0L1080.9,421.0L1089.9,421.0L1098.9,421.0L1107.8,421.0L1116.6,421.0L1125.2,421.0L1126.0,421.0L1134.5,421.0L1143.4,421.0L1152.4,421.0L1161.1,421.0L1161.9,421.0L1170.2,421.0L1170.6,421.0L1170.6,421.0Z" fill="#c0eef2"/>
<path d="M446.2,395.8L454.5,393.1L463.4,412.2L472.5,409.5L481.4,405.4L490.4,384.9L499.3,408.1L508.2,406.1L517.2,408.1L526.1,410.9L535.1,408.1L544.0,391.9L552.9,414.4L561.9,415.8L570.9,406.9L579.8,402.5L588.8,400.0L597.6,396.2M598.1,396.5L606.6,404.4L615.4,413.8M615.9,413.8L624.5,419.4M634.0,414.8L642.4,408.8L651.4,398.5L660.4,408.8M660.9,408.8L669.2,408.5L678.2,407.8L687.1,408.8L696.1,405.9L705.1,397.1L714.0,392.9L723.0,396.2L731.9,407.1L740.9,402.9L749.6,400.4M750.1,400.4L758.8,403.0L767.8,399.0L776.4,400.4M776.9,400.4L785.6,401.2L794.4,410.0L795.1,413.8L803.5,416.9L812.5,413.4L821.4,411.2L830.4,410.9L839.2,409.4L848.2,410.4L857.1,411.6L866.1,407.2L875.1,403.1L884.0,408.5L893.0,411.5L901.9,411.9L910.9,413.5L919.9,414.1L928.8,413.4L937.8,413.1L946.6,406.9L955.6,400.0L964.6,398.1L973.5,392.5L982.5,401.2L991.4,405.6L1000.4,401.9L1009.4,401.2L1018.2,403.1L1027.2,398.2L1035.9,402.5L1036.6,421.0" fill="none" stroke="#b0e8ee" stroke-width="1.6" stroke-linejoin="round"/>
<path d="M98.8,421.0L98.8,421.0L245.0,421.0L248.8,421.0L257.9,421.0L266.6,421.0L275.6,421.0L284.5,421.0L293.5,421.0L302.5,421.0L311.4,421.0L320.4,421.0L329.2,421.0L338.2,417.5L338.8,416.2L347.1,408.8L356.1,411.2L365.1,405.6L374.0,408.8L383.0,410.0L390.0,410.0L391.8,409.5L400.9,411.1L409.8,413.6L418.7,414.7L427.7,409.5L436.6,404.0L445.6,406.1L446.2,406.8L454.5,405.4L463.4,413.0L472.5,410.9L481.4,407.4L490.4,397.2L499.3,417.7L508.2,416.3L517.2,414.3L526.1,412.2L535.1,412.2L544.0,411.9L552.9,416.9L561.9,416.9L570.9,408.5L579.8,408.1L588.8,407.5L597.6,405.6L598.1,405.9L606.6,411.5L615.4,415.6L615.9,415.8L624.5,420.0L633.5,416.5L634.0,420.8L642.4,416.9L651.4,411.2L660.4,418.1L660.9,421.0L669.2,421.0L678.2,421.0L687.1,418.8L696.1,411.9L705.1,408.1L714.0,406.9L723.0,408.1L731.9,415.6L740.9,413.8L749.6,408.8L750.1,408.8L758.8,412.5L767.8,409.8L776.4,411.2L776.9,411.2L785.6,411.9L794.4,416.9L795.1,421.0L803.5,421.0L812.5,421.0L821.4,421.0L830.4,421.0L839.2,421.0L848.2,421.0L857.1,421.0L866.1,415.6L875.1,413.1L884.0,413.8L893.0,415.0L901.9,416.5L910.9,418.8L919.9,420.6L928.8,421.0L937.8,421.0L946.6,413.8L955.6,411.2L964.6,411.9L973.5,411.9L982.5,416.2L991.4,419.4L1000.4,411.2L1009.4,407.5L1018.2,409.4L1027.2,408.1L1035.9,411.9L1036.6,421.0L1045.1,421.0L1054.1,421.0L1063.0,421.0L1072.0,421.0L1080.9,421.0L1089.9,421.0L1098.9,421.0L1107.8,421.0L1116.6,421.0L1125.2,421.0L1126.0,421.0L1134.5,421.0L1143.4,421.0L1152.4,421.0L1161.1,421.0L1161.9,421.0L1170.2,421.0L1170.6,421.0L1170.6,421.0Z" fill="#fdf3ad"/>
<path d="M329.2,421.0L338.2,417.5L338.8,416.2L347.1,408.8L356.1,411.2L365.1,405.6L374.0,408.8L383.0,410.0L390.0,410.0L391.8,409.5L400.9,411.1L409.8,413.6L418.7,414.7L427.7,409.5L436.6,404.0L445.6,406.1M446.2,406.8L454.5,405.4L463.4,413.0L472.5,410.9L481.4,407.4L490.4,397.2L499.3,417.7L508.2,416.3L517.2,414.3L526.1,412.2L535.1,412.2L544.0,411.9L552.9,416.9L561.9,416.9L570.9,408.5L579.8,408.1L588.8,407.5L597.6,405.6M598.1,405.9L606.6,411.5L615.4,415.6M615.9,415.8L624.5,420.0L633.5,416.5M634.0,420.8L642.4,416.9L651.4,411.2L660.4,418.1M678.2,421.0L687.1,418.8L696.1,411.9L705.1,408.1L714.0,406.9L723.0,408.1L731.9,415.6L740.9,413.8L749.6,408.8M750.1,408.8L758.8,412.5L767.8,409.8L776.4,411.2M776.9,411.2L785.6,411.9L794.4,416.9L795.1,421.0M857.1,421.0L866.1,415.6L875.1,413.1L884.0,413.8L893.0,415.0L901.9,416.5L910.9,418.8L919.9,420.6M937.8,421.0L946.6,413.8L955.6,411.2L964.6,411.9L973.5,411.9L982.5,416.2L991.4,419.4L1000.4,411.2L1009.4,407.5L1018.2,409.4L1027.2,408.1L1035.9,411.9L1036.6,421.0" fill="none" stroke="#fbee9c" stroke-width="1.6" stroke-linejoin="round"/>
  </g>
  <path d="M96,421.3H1173M96,276.3H98M96,313.2H98M96,349.3H98M96,385.4H98" stroke="#dcd8ee" stroke-width="1" fill="none"/>
  <path d="M114.6,421V424M204.1,421V424M293.5,421V424M383,421V424M472.4,421V424M561.9,421V424M651.4,421V424M740.8,421V424M830.3,421V424M919.7,421V424M1009.2,421V424M1098.7,421V424" stroke="#c9cdf0" stroke-width="1" fill="none"/>
</svg>
<div id="ylab" class="abs"><span>Estimated CPU time</span></div>
<!-- table -->
<div id="morebtn" class="abs"></div>
<div id="thline" class="abs"></div>
<svg class="abs" style="left:0;top:526px" width="1200" height="14" viewBox="0 526 1200 14">
  <g fill="#b0b0b0">
    <path d="M62.6,531.6L64.8,529L67,531.6ZM62.6,533.4L64.8,536L67,533.4Z"/>
    <path d="M821.2,531.6L823.4,529L825.6,531.6ZM821.2,533.4L823.4,536L825.6,533.4Z"/>
    <path d="M1098,531.6L1100.2,529L1102.4,531.6ZM1098,533.4L1100.2,536L1102.4,533.4Z"/>
  </g>
  <path d="M983.6,531L988.4,531L986,534.6Z" fill="#454646"/>
</svg>
<div class="abs" style="left:34px;top:559.00px;width:12.2px;height:12px;background:#5fdbe6"></div>
<svg class="abs" style="left:34px;top:559.00px" width="12" height="12" viewBox="0 0 12 12"><g fill="#1d9fae" opacity="0.8"><circle cx="3.5" cy="3.6" r="0.55"/><circle cx="5.4" cy="4.6" r="0.55"/><circle cx="7.4" cy="2.6" r="0.55"/><circle cx="9.5" cy="3.6" r="0.55"/><circle cx="2.4" cy="6.6" r="0.55"/><circle cx="8.4" cy="6.6" r="0.55"/><circle cx="5.4" cy="8.6" r="0.55"/><circle cx="8.4" cy="9.6" r="0.55"/><circle cx="3.4" cy="10.5" r="0.55"/></g></svg>
<div class="abs" style="left:578.7px;top:562.20px;width:248.3px;height:5.5px;background:#e6e6e6"><div class="abs" style="left:0;top:0;width:248.3px;height:5.5px;background:#debbf3"></div><div class="abs" style="left:0;top:0;width:3px;height:5.5px;background:#3d5bd0"></div></div>
<div class="abs" style="left:24.5px;top:583.25px;width:1155.5px;height:36.25px;background:#f8f8f8"></div>
<div class="abs" style="left:34px;top:595.25px;width:12.2px;height:12px;background:#c9a227"></div>
<div class="abs" style="left:578.7px;top:598.45px;width:248.3px;height:5.5px;background:#e6e6e6"><div class="abs" style="left:0;top:0;width:248.3px;height:5.5px;background:#debbf3"></div><div class="abs" style="left:0;top:0;width:1.5px;height:5.5px;background:#3d5bd0"></div></div>
<div class="abs" style="left:34px;top:631.50px;width:12.2px;height:12px;background:#c8602a"></div>
<div class="abs" style="left:578.7px;top:634.70px;width:248.3px;height:5.5px;background:#e6e6e6"><div class="abs" style="left:0;top:0;width:248.3px;height:5.5px;background:#debbf3"></div><div class="abs" style="left:0;top:0;width:1.5px;height:5.5px;background:#3d5bd0"></div></div>
<div class="abs" style="left:24.5px;top:655.75px;width:1155.5px;height:36.25px;background:#f8f8f8"></div>
<div class="abs" style="left:34px;top:667.75px;width:12.2px;height:12px;background:#1a7b85"></div>
<div class="abs" style="left:578.7px;top:670.95px;width:248.3px;height:5.5px;background:#e6e6e6"><div class="abs" style="left:0;top:0;width:248.3px;height:5.5px;background:#debbf3"></div><div class="abs" style="left:0;top:0;width:1.5px;height:5.5px;background:#3d5bd0"></div></div>
<div class="abs" style="left:34px;top:704.00px;width:12.2px;height:12px;background:#fd8232"></div>
<div class="abs" style="left:578.7px;top:707.20px;width:248.3px;height:5.5px;background:#e6e6e6"><div class="abs" style="left:0;top:0;width:248.3px;height:5.5px;background:#debbf3"></div><div class="abs" style="left:0;top:0;width:1.5px;height:5.5px;background:#3d5bd0"></div></div>
<div class="abs" style="left:24.5px;top:728.25px;width:1155.5px;height:36.25px;background:#f8f8f8"></div>
<div class="abs" style="left:34px;top:740.25px;width:12.2px;height:12px;background:#f5d30f"></div>
<div class="abs" style="left:578.7px;top:743.45px;width:248.3px;height:5.5px;background:#e6e6e6"><div class="abs" style="left:0;top:0;width:124.2px;height:5.5px;background:#debbf3"></div><div class="abs" style="left:0;top:0;width:1.5px;height:5.5px;background:#3d5bd0"></div></div>
<div class="abs" style="left:34px;top:776.50px;width:12.2px;height:12px;background:#1fa7b3"></div>
<div class="abs" style="left:578.7px;top:779.70px;width:248.3px;height:5.5px;background:#e6e6e6"><div class="abs" style="left:0;top:0;width:248.3px;height:5.5px;background:#debbf3"></div><div class="abs" style="left:0;top:0;width:1.5px;height:5.5px;background:#3d5bd0"></div></div>
<div class="abs" style="left:24.5px;top:800.75px;width:1155.5px;height:36.25px;background:#f8f8f8"></div>
<div class="abs" style="left:34px;top:812.75px;width:12.2px;height:12px;background:#fbd3b2"></div>
<div class="abs" style="left:578.7px;top:815.95px;width:248.3px;height:5.5px;background:#e6e6e6"><div class="abs" style="left:0;top:0;width:124.2px;height:5.5px;background:#debbf3"></div><div class="abs" style="left:0;top:0;width:1.5px;height:5.5px;background:#3d5bd0"></div></div>
<div class="abs" style="left:34px;top:849.00px;width:12.2px;height:12px;background:#a9e6ec"></div>
<div class="abs" style="left:578.7px;top:852.20px;width:248.3px;height:5.5px;background:#e6e6e6"><div class="abs" style="left:0;top:0;width:248.3px;height:5.5px;background:#debbf3"></div><div class="abs" style="left:0;top:0;width:1.5px;height:5.5px;background:#3d5bd0"></div></div>
<div class="abs" style="left:24.5px;top:873.25px;width:1155.5px;height:36.25px;background:#f8f8f8"></div>
<div class="abs" style="left:34px;top:885.25px;width:12.2px;height:12px;background:#fdf0a0"></div>
<svg class="abs" style="left:34px;top:885.25px" width="12" height="12" viewBox="0 0 12 12"><g fill="#f3cc2a" opacity="0.75"><circle cx="1.20" cy="1.20" r="0.5"/><circle cx="2.75" cy="1.20" r="0.5"/><circle cx="4.30" cy="1.20" r="0.5"/><circle cx="5.85" cy="1.20" r="0.5"/><circle cx="7.40" cy="1.20" r="0.5"/><circle cx="8.95" cy="1.20" r="0.5"/><circle cx="10.50" cy="1.20" r="0.5"/><circle cx="1.98" cy="2.70" r="0.5"/><circle cx="3.53" cy="2.70" r="0.5"/><circle cx="5.08" cy="2.70" r="0.5"/><circle cx="6.63" cy="2.70" r="0.5"/><circle cx="8.18" cy="2.70" r="0.5"/><circle cx="9.73" cy="2.70" r="0.5"/><circle cx="11.28" cy="2.70" r="0.5"/><circle cx="1.20" cy="4.20" r="0.5"/><circle cx="2.75" cy="4.20" r="0.5"/><circle cx="4.30" cy="4.20" r="0.5"/><circle cx="5.85" cy="4.20" r="0.5"/><circle cx="7.40" cy="4.20" r="0.5"/><circle cx="8.95" cy="4.20" r="0.5"/><circle cx="10.50" cy="4.20" r="0.5"/><circle cx="1.98" cy="5.70" r="0.5"/><circle cx="3.53" cy="5.70" r="0.5"/><circle cx="5.08" cy="5.70" r="0.5"/><circle cx="6.63" cy="5.70" r="0.5"/><circle cx="8.18" cy="5.70" r="0.5"/><circle cx="9.73" cy="5.70" r="0.5"/><circle cx="11.28" cy="5.70" r="0.5"/><circle cx="1.20" cy="7.20" r="0.5"/><circle cx="2.75" cy="7.20" r="0.5"/><circle cx="4.30" cy="7.20" r="0.5"/><circle cx="5.85" cy="7.20" r="0.5"/><circle cx="7.40" cy="7.20" r="0.5"/><circle cx="8.95" cy="7.20" r="0.5"/><circle cx="10.50" cy="7.20" r="0.5"/><circle cx="1.98" cy="8.70" r="0.5"/><circle cx="3.53" cy="8.70" r="0.5"/><circle cx="5.08" cy="8.70" r="0.5"/><circle cx="6.63" cy="8.70" r="0.5"/><circle cx="8.18" cy="8.70" r="0.5"/><circle cx="9.73" cy="8.70" r="0.5"/><circle cx="11.28" cy="8.70" r="0.5"/><circle cx="1.20" cy="10.20" r="0.5"/><circle cx="2.75" cy="10.20" r="0.5"/><circle cx="4.30" cy="10.20" r="0.5"/><circle cx="5.85" cy="10.20" r="0.5"/><circle cx="7.40" cy="10.20" r="0.5"/><circle cx="8.95" cy="10.20" r="0.5"/><circle cx="10.50" cy="10.20" r="0.5"/></g></svg>
<div class="abs" style="left:578.7px;top:888.45px;width:248.3px;height:5.5px;background:#e6e6e6"><div class="abs" style="left:0;top:0;width:248.3px;height:5.5px;background:#debbf3"></div><div class="abs" style="left:0;top:0;width:1.5px;height:5.5px;background:#3d5bd0"></div></div>
<svg class="abs" style="left:1140px;top:480px" width="40" height="433" viewBox="1140 480 40 433"><g fill="#1f9eae"><circle cx="1153.9" cy="565.20" r="1.35"/><circle cx="1158.3" cy="565.20" r="1.35"/><circle cx="1162.7" cy="565.20" r="1.35"/><circle cx="1153.9" cy="601.45" r="1.35"/><circle cx="1158.3" cy="601.45" r="1.35"/><circle cx="1162.7" cy="601.45" r="1.35"/><circle cx="1153.9" cy="637.70" r="1.35"/><circle cx="1158.3" cy="637.70" r="1.35"/><circle cx="1162.7" cy="637.70" r="1.35"/><circle cx="1153.9" cy="673.95" r="1.35"/><circle cx="1158.3" cy="673.95" r="1.35"/><circle cx="1162.7" cy="673.95" r="1.35"/><circle cx="1153.9" cy="710.20" r="1.35"/><circle cx="1158.3" cy="710.20" r="1.35"/><circle cx="1162.7" cy="710.20" r="1.35"/><circle cx="1153.9" cy="746.45" r="1.35"/><circle cx="1158.3" cy="746.45" r="1.35"/><circle cx="1162.7" cy="746.45" r="1.35"/><circle cx="1153.9" cy="782.70" r="1.35"/><circle cx="1158.3" cy="782.70" r="1.35"/><circle cx="1162.7" cy="782.70" r="1.35"/><circle cx="1153.9" cy="818.95" r="1.35"/><circle cx="1158.3" cy="818.95" r="1.35"/><circle cx="1162.7" cy="818.95" r="1.35"/><circle cx="1153.9" cy="855.20" r="1.35"/><circle cx="1158.3" cy="855.20" r="1.35"/><circle cx="1162.7" cy="855.20" r="1.35"/><circle cx="1153.9" cy="891.45" r="1.35"/><circle cx="1158.3" cy="891.45" r="1.35"/><circle cx="1162.7" cy="891.45" r="1.35"/><circle cx="1153.6" cy="497.1" r="1.35"/><circle cx="1158" cy="497.1" r="1.35"/><circle cx="1162.4" cy="497.1" r="1.35"/></g></svg>
<div id="txt" style="position:absolute;left:0;top:0;width:1200px;height:913px;will-change:transform">
<span class="t" style="left:6.0px;top:36.9px;font-size:10.5px;letter-spacing:0.067px;color:#fff;">Profiling and optimization</span>
<span class="t" style="left:144.3px;top:36.9px;font-size:10.5px;letter-spacing:-0.152px;color:#fff;">Continuous CPU profiling</span>
<span class="t" style="left:278.2px;top:36.9px;font-size:10.5px;letter-spacing:-0.309px;color:#fff;">Thread analysis</span>
<span class="t" style="left:367.5px;top:36.9px;font-size:10.5px;letter-spacing:0.086px;color:#fff;">ajp-bio-*-exec</span>
<span class="t" style="left:56.9px;top:66.9px;font-size:19.2px;letter-spacing:-0.205px;color:#454646;font-weight:bold;-webkit-text-stroke:0;">Thread analysis of process group 'eT-demo-1-BusinessBackend'</span>
<span class="t" style="left:85.0px;top:101.4px;font-size:9.8px;letter-spacing:-0.085px;color:#454646;">Today, 14:08 - 16:08</span>
<span class="t" style="left:37.2px;top:152.7px;font-size:10.4px;letter-spacing:-0.088px;color:#898989;">Filter requests:</span>
<span class="t" style="left:117.5px;top:152.7px;font-size:10.4px;letter-spacing:0.059px;color:#898989;">Thread group ~ &quot;ajp-bio-*-exec&quot;</span>
<span class="t" style="left:25.3px;top:199.9px;font-size:14.4px;letter-spacing:-0.130px;color:#454646;font-weight:bold;-webkit-text-stroke:0;">Thread breakdown</span>
<span class="t" style="left:156.3px;top:203.4px;font-size:10px;letter-spacing:0.007px;color:#454646;">(642k stacktrace samples of 4 processes analyzed)</span>
<span class="t" style="left:25.3px;top:237.6px;font-size:10.4px;letter-spacing:-0.209px;color:#454646;">View:</span>
<span class="t" style="left:62.5px;top:237.7px;font-size:10.2px;letter-spacing:-0.083px;color:#4556d7;">Thread states</span>
<span class="t" style="left:142.5px;top:237.7px;font-size:10.2px;letter-spacing:-0.199px;color:#3f4fcf;">CPU time</span>
<span class="t" style="left:226.7px;top:237.6px;font-size:10.4px;letter-spacing:0.014px;color:#454646;">Include waiting threads</span>
<span class="t" style="left:53.5px;top:272.5px;font-size:8.6px;letter-spacing:0.288px;color:#454646;">20 s/min</span>
<span class="t" style="left:54.5px;top:308.7px;font-size:8.6px;letter-spacing:0.145px;color:#454646;">15 s/min</span>
<span class="t" style="left:53.5px;top:344.9px;font-size:8.6px;letter-spacing:0.288px;color:#454646;">10 s/min</span>
<span class="t" style="left:58.5px;top:381.2px;font-size:8.6px;letter-spacing:0.299px;color:#454646;">5 s/min</span>
<span class="t" style="left:51.2px;top:417.1px;font-size:8.6px;letter-spacing:0.277px;color:#454646;">0 ms/min</span>
<span class="t" style="left:105.2px;top:428.7px;font-size:8.1px;letter-spacing:-0.366px;color:#454646;">14:10</span>
<span class="t" style="left:194.0px;top:428.7px;font-size:8.1px;letter-spacing:-0.041px;color:#454646;">14:20</span>
<span class="t" style="left:283.5px;top:428.7px;font-size:8.1px;letter-spacing:-0.041px;color:#454646;">14:30</span>
<span class="t" style="left:372.9px;top:428.7px;font-size:8.1px;letter-spacing:-0.041px;color:#454646;">14:40</span>
<span class="t" style="left:462.4px;top:428.7px;font-size:8.1px;letter-spacing:-0.041px;color:#454646;">14:50</span>
<span class="t" style="left:551.9px;top:428.7px;font-size:8.1px;letter-spacing:-0.041px;color:#454646;">15:00</span>
<span class="t" style="left:642.0px;top:428.7px;font-size:8.1px;letter-spacing:-0.366px;color:#454646;">15:10</span>
<span class="t" style="left:730.8px;top:428.7px;font-size:8.1px;letter-spacing:-0.041px;color:#454646;">15:20</span>
<span class="t" style="left:820.2px;top:428.7px;font-size:8.1px;letter-spacing:-0.041px;color:#454646;">15:30</span>
<span class="t" style="left:909.7px;top:428.7px;font-size:8.1px;letter-spacing:-0.041px;color:#454646;">15:40</span>
<span class="t" style="left:999.1px;top:428.7px;font-size:8.1px;letter-spacing:-0.041px;color:#454646;">15:50</span>
<span class="t" style="left:1088.6px;top:428.7px;font-size:8.1px;letter-spacing:-0.041px;color:#454646;">16:00</span>
<span class="t" style="left:25.0px;top:488.9px;font-size:14.4px;letter-spacing:0.046px;color:#454646;font-weight:bold;-webkit-text-stroke:0;">Showing 55 threads of ajp-bio-*-exec</span>
<span class="t" style="left:33.8px;top:528.5px;font-size:8.8px;letter-spacing:-0.023px;color:#5a5a5a;">Name</span>
<span class="t" style="left:696.2px;top:528.5px;font-size:8.8px;letter-spacing:0.217px;color:#5a5a5a;">Overall execution breakdown</span>
<span class="t" style="left:897.9px;top:528.5px;font-size:8.8px;letter-spacing:-0.164px;color:#454646;font-weight:bold;-webkit-text-stroke:0;">Estimated CPU time</span>
<span class="t" style="left:1037.3px;top:528.5px;font-size:8.8px;letter-spacing:-0.021px;color:#5a5a5a;">Process count</span>
<span class="t" style="left:1140.8px;top:528.5px;font-size:8.8px;letter-spacing:0.173px;color:#5a5a5a;">Actions</span>
<span class="t" style="left:60.6px;top:559.9px;font-size:10.4px;letter-spacing:0.063px;color:#1f9eae;">ajp-bio-28281-exec-6</span>
<span class="t" style="left:537.2px;top:560.0px;font-size:10.2px;letter-spacing:-0.444px;color:#454646;">2.25 %</span>
<span class="t" style="left:934.0px;top:560.1px;font-size:10.0px;letter-spacing:-0.073px;color:#454646;font-weight:bold;-webkit-text-stroke:0;">3 min 4.07 s</span>
<span class="t" style="left:1098.7px;top:560.0px;font-size:10.2px;letter-spacing:-0.172px;color:#454646;">2</span>
<span class="t" style="left:60.6px;top:596.2px;font-size:10.4px;letter-spacing:0.051px;color:#1f9eae;">ajp-bio-28280-exec-17</span>
<span class="t" style="left:537.2px;top:596.3px;font-size:10.2px;letter-spacing:-0.444px;color:#454646;">2.24 %</span>
<span class="t" style="left:933.7px;top:596.4px;font-size:10.0px;letter-spacing:-0.046px;color:#454646;font-weight:bold;-webkit-text-stroke:0;">1 min 54.6 s</span>
<span class="t" style="left:1098.7px;top:596.3px;font-size:10.2px;letter-spacing:-0.172px;color:#454646;">2</span>
<span class="t" style="left:60.6px;top:632.4px;font-size:10.4px;letter-spacing:0.063px;color:#1f9eae;">ajp-bio-28280-exec-7</span>
<span class="t" style="left:537.2px;top:632.5px;font-size:10.2px;letter-spacing:-0.444px;color:#454646;">2.24 %</span>
<span class="t" style="left:933.7px;top:632.6px;font-size:10.0px;letter-spacing:-0.046px;color:#454646;font-weight:bold;-webkit-text-stroke:0;">1 min 51.9 s</span>
<span class="t" style="left:1098.7px;top:632.5px;font-size:10.2px;letter-spacing:-0.172px;color:#454646;">2</span>
<span class="t" style="left:60.6px;top:668.7px;font-size:10.4px;letter-spacing:0.063px;color:#1f9eae;">ajp-bio-28281-exec-7</span>
<span class="t" style="left:537.2px;top:668.8px;font-size:10.2px;letter-spacing:-0.444px;color:#454646;">2.25 %</span>
<span class="t" style="left:933.7px;top:668.9px;font-size:10.0px;letter-spacing:-0.046px;color:#454646;font-weight:bold;-webkit-text-stroke:0;">1 min 43.6 s</span>
<span class="t" style="left:1098.7px;top:668.8px;font-size:10.2px;letter-spacing:-0.172px;color:#454646;">2</span>
<span class="t" style="left:60.6px;top:704.9px;font-size:10.4px;letter-spacing:0.090px;color:#1f9eae;">ajp-bio-28280-exec-11</span>
<span class="t" style="left:537.2px;top:705.0px;font-size:10.2px;letter-spacing:-0.444px;color:#454646;">2.24 %</span>
<span class="t" style="left:933.7px;top:705.1px;font-size:10.0px;letter-spacing:-0.046px;color:#454646;font-weight:bold;-webkit-text-stroke:0;">1 min 38.4 s</span>
<span class="t" style="left:1098.7px;top:705.0px;font-size:10.2px;letter-spacing:-0.172px;color:#454646;">2</span>
<span class="t" style="left:60.6px;top:741.2px;font-size:10.4px;letter-spacing:0.051px;color:#1f9eae;">ajp-bio-28281-exec-21</span>
<span class="t" style="left:537.2px;top:741.3px;font-size:10.2px;letter-spacing:-0.444px;color:#454646;">1.13 %</span>
<span class="t" style="left:933.7px;top:741.4px;font-size:10.0px;letter-spacing:-0.046px;color:#454646;font-weight:bold;-webkit-text-stroke:0;">1 min 33.1 s</span>
<span class="t" style="left:1098.7px;top:741.3px;font-size:10.2px;letter-spacing:-0.172px;color:#454646;">1</span>
<span class="t" style="left:60.6px;top:777.4px;font-size:10.4px;letter-spacing:0.063px;color:#1f9eae;">ajp-bio-28280-exec-8</span>
<span class="t" style="left:537.2px;top:777.5px;font-size:10.2px;letter-spacing:-0.444px;color:#454646;">2.24 %</span>
<span class="t" style="left:933.7px;top:777.6px;font-size:10.0px;letter-spacing:-0.046px;color:#454646;font-weight:bold;-webkit-text-stroke:0;">1 min 20.2 s</span>
<span class="t" style="left:1098.7px;top:777.5px;font-size:10.2px;letter-spacing:-0.172px;color:#454646;">2</span>
<span class="t" style="left:60.6px;top:813.7px;font-size:10.4px;letter-spacing:0.051px;color:#1f9eae;">ajp-bio-28281-exec-20</span>
<span class="t" style="left:537.2px;top:813.8px;font-size:10.2px;letter-spacing:-0.444px;color:#454646;">1.13 %</span>
<span class="t" style="left:933.7px;top:813.9px;font-size:10.0px;letter-spacing:-0.046px;color:#454646;font-weight:bold;-webkit-text-stroke:0;">1 min 19.5 s</span>
<span class="t" style="left:1098.7px;top:813.8px;font-size:10.2px;letter-spacing:-0.172px;color:#454646;">1</span>
<span class="t" style="left:60.6px;top:849.9px;font-size:10.4px;letter-spacing:0.051px;color:#1f9eae;">ajp-bio-28280-exec-15</span>
<span class="t" style="left:537.2px;top:850.0px;font-size:10.2px;letter-spacing:-0.444px;color:#454646;">2.24 %</span>
<span class="t" style="left:933.7px;top:850.1px;font-size:10.0px;letter-spacing:-0.046px;color:#454646;font-weight:bold;-webkit-text-stroke:0;">1 min 15.9 s</span>
<span class="t" style="left:1098.7px;top:850.0px;font-size:10.2px;letter-spacing:-0.172px;color:#454646;">2</span>
<span class="t" style="left:60.6px;top:886.2px;font-size:10.4px;letter-spacing:0.090px;color:#1f9eae;">ajp-bio-28281-exec-11</span>
<span class="t" style="left:537.2px;top:886.3px;font-size:10.2px;letter-spacing:-0.444px;color:#454646;">2.25 %</span>
<span class="t" style="left:933.7px;top:886.4px;font-size:10.0px;letter-spacing:-0.046px;color:#454646;font-weight:bold;-webkit-text-stroke:0;">1 min 14.6 s</span>
<span class="t" style="left:1098.7px;top:886.3px;font-size:10.2px;letter-spacing:-0.172px;color:#454646;">2</span>
</div>
</body>
</html>
